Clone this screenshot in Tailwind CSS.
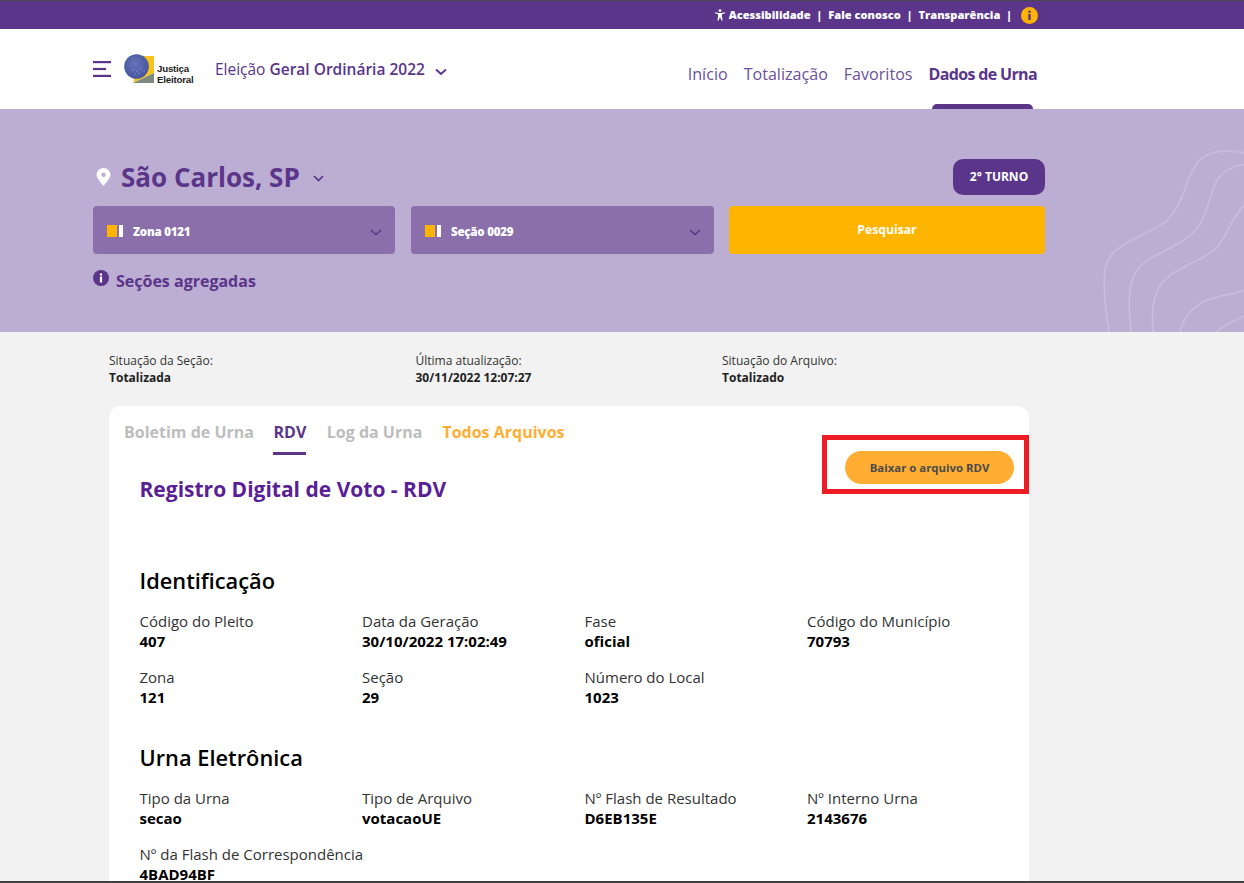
<!DOCTYPE html>
<html lang="pt-BR"><head><meta charset="utf-8"><title>Dados de Urna</title>
<script src="https://cdn.jsdelivr.net/npm/@tailwindcss/browser@4"></script></head>
<body class="m-0">
<div class="relative h-[883px] w-[1244px] overflow-hidden bg-[#f2f2f2] font-['Open_Sans','Noto_Sans',sans-serif] text-black">
  <div class="flex h-[29px] items-center justify-end border-t border-[#4a4a4a] bg-[#5a358a] pr-[206px] text-[11.100px] font-extrabold text-white">
    <svg class="mr-[3px] h-3 w-3" viewBox="0 0 12 12" fill="#fff"><circle cx="6" cy="1.600" r="1.400"/><path d="M1 3.200l3.500.8h3l3.500-.8.300.9L8 5.200v2.300l.5 4H7.400L6 8l-1.400 3.500H3.500l.5-4V5.200L.7 4.100z"/></svg>
    <span>Acessibilidade</span><span class="mx-[6px]">|</span><span>Fale conosco</span><span class="mx-[6px]">|</span><span>Transparência</span><span class="mx-[6px]">|</span>
    <svg class="ml-[3px] h-[17px] w-[17px]" viewBox="0 0 17 17"><circle cx="8.500" cy="8.500" r="8.500" fill="#ffb400"/><rect x="7.300" y="7" width="2.400" height="6" fill="#5a358a"/><circle cx="8.500" cy="4.800" r="1.300" fill="#5a358a"/></svg>
  </div>
  <header class="relative flex h-[80px] bg-white pl-[93px] pr-[207px]">
    <div class="flex items-center self-start pt-[24px]">
      <svg class="h-[16px] w-[19px]" viewBox="0 0 19 16" fill="#5a358a"><rect y="0" width="18" height="2.200"/><rect y="6.900" width="13" height="2.200"/><rect y="13.800" width="18" height="2.200"/></svg>
      <svg class="ml-[12px] h-[32px] w-[32px]" viewBox="0 0 32 32">
        <path d="M18 3h12v17L9 30z" fill="#f6c31c"/><path d="M9 30l21-10v10z" fill="#7c8a80"/>
        <defs><radialGradient id="g" cx=".45" cy=".4" r=".7"><stop offset="0" stop-color="#6674b8"/><stop offset="1" stop-color="#414e9a"/></radialGradient></defs>
        <circle cx="12.500" cy="13.500" r="12.300" fill="url(#g)"/>
        <g fill="#aab3dd"><circle cx="9" cy="17" r=".6"/><circle cx="13" cy="18" r=".6"/><circle cx="17" cy="16" r=".6"/><circle cx="15" cy="20" r=".6"/><circle cx="20" cy="18" r=".6"/><circle cx="11" cy="21" r=".5"/></g></svg>
      <div class="ml-[1px] mt-[9px] font-['Liberation_Sans',sans-serif] text-[9.700px] font-bold leading-[11px] tracking-[-0.2px] text-[#222]"><div>Justiça</div><div>Eleitoral</div></div>
      <div class="ml-[21.500px] mt-[2px] flex items-center text-[15.500px] text-[#5a358a]"><span>Eleição&nbsp;</span><b class="font-semibold">Geral Ordinária 2022</b>
        <svg class="ml-[10px] mt-[3px] h-[8px] w-[12px]" viewBox="0 0 12 8" fill="none" stroke="#5a358a" stroke-width="2"><path d="M1 1.500l5 4.500 5-4.500"/></svg></div>
    </div>
    <nav class="ml-auto flex gap-[16px] pt-[34px] text-[16.100px] leading-[22px] text-[#6d4f9c]">
      <span>Início</span><span>Totalização</span><span>Favoritos</span><span class="text-[16px] font-bold tracking-[-0.65px] text-[#5a358a]">Dados de Urna</span>
    </nav>
    <div class="absolute bottom-0 left-[932px] h-[5px] w-[101px] rounded-t-[5px] bg-[#5a358a]"></div>
  </header>
  <section class="relative h-[223px] overflow-hidden bg-[#bcadd2] pl-[93px] pr-[199px] pt-[50px]">
    <svg class="absolute left-[1100px] top-[40px] h-[183px] w-[144px]" viewBox="0 0 144 183" fill="none" stroke="#c7bbdb" stroke-width="2">
      <path d="M9 183C6 165 3 140 5 122 8 95 40 90 62 75 85 60 85 25 100 11 112 0 130 1 144 4"/>
      <path d="M31 183C29 165 28 150 31 135 38 105 70 105 92 85 110 68 108 40 122 25 128 20 136 16 144 16"/>
      <path d="M53 183C52 170 52 155 56 145 66 118 95 118 115 100 128 88 130 70 144 56"/>
      <path d="M80 183C84 168 90 160 105 152 118 146 134 146 144 141"/>
      <path d="M116 183C124 176 134 172 144 167"/>
    </svg>
    <div class="relative flex h-[36px] items-center justify-between">
      <div class="flex items-center">
        <svg class="ml-[3px] h-[18px] w-[15px]" viewBox="0 0 15 18"><path fill-rule="evenodd" fill="#fff" d="M7.500 18C3 12.500.5 9.500.5 6.800a7 6.800 0 0 1 14 0C14.500 9.500 12 12.500 7.500 18zM7.500 4.500a2.200 2.200 0 1 0 0 4.400 2.200 2.200 0 0 0 0-4.400z"/></svg>
        <h1 class="ml-[10px] text-[26px] font-bold leading-[36px] text-[#5a358a]">São Carlos, SP</h1>
        <svg class="ml-[13px] mt-[3px] h-[7px] w-[11px]" viewBox="0 0 11 7" fill="none" stroke="#5a358a" stroke-width="1.700"><path d="M1 1l4.500 4.500L10 1"/></svg>
      </div>
      <button class="flex h-[36px] w-[92px] items-center justify-center rounded-[10px] bg-[#5a358a] text-[12px] font-bold text-white">2° TURNO</button>
    </div>
    <div class="relative mt-[11px] flex gap-[16px]">
      <div class="flex h-[48px] w-[302px] items-center rounded-[4px] bg-[#8a6fab] pl-[14px] pr-[13px] text-[11.500px] font-extrabold text-white">
        <i class="mt-[2px] h-[12px] w-[10px] bg-[#ffb400]"></i><i class="ml-[2px] mt-[2px] h-[12px] w-[4px] bg-white"></i><span class="ml-[10px] pt-[3px] tracking-[-0.2px]">Zona 0121</span>
        <svg class="ml-auto mt-[4px] h-[7px] w-[12px]" viewBox="0 0 12 7" fill="none" stroke="#5a358a" stroke-width="1.500"><path d="M1 1l5 4.500L11 1"/></svg>
      </div>
      <div class="flex h-[48px] w-[303px] items-center rounded-[4px] bg-[#8a6fab] pl-[14px] pr-[13px] text-[11.500px] font-extrabold text-white">
        <i class="mt-[2px] h-[12px] w-[10px] bg-[#ffb400]"></i><i class="ml-[2px] mt-[2px] h-[12px] w-[4px] bg-white"></i><span class="ml-[10px] pt-[3px] tracking-[-0.2px]">Seção 0029</span>
        <svg class="ml-auto mt-[4px] h-[7px] w-[12px]" viewBox="0 0 12 7" fill="none" stroke="#5a358a" stroke-width="1.500"><path d="M1 1l5 4.500L11 1"/></svg>
      </div>
      <button class="-ml-[1px] h-[48px] w-[316px] rounded-[4px] bg-[#ffb400] text-[12.200px] font-bold text-white">Pesquisar</button>
    </div>
    <div class="relative mt-[15px] flex items-start text-[#5a358a]">
      <svg class="mt-[1px] h-[16px] w-[16px]" viewBox="0 0 16 16"><circle cx="8" cy="8" r="8" fill="#5a358a"/><rect x="6.900" y="6.500" width="2.200" height="6" fill="#fff"/><circle cx="8" cy="4.400" r="1.200" fill="#fff"/></svg>
      <span class="ml-[7px] text-[16px] font-bold leading-[24px]">Seções agregadas</span>
    </div>
  </section>
  <div class="ml-[109px] grid w-[920px] grid-cols-[306.500px_306.500px_1fr] pt-[20px] text-[12px] leading-[17px] text-[#333]">
    <div>Situação da Seção:<br><b class="text-[#222]">Totalizada</b></div>
    <div>Última atualização:<br><b class="text-[#222]">30/11/2022 12:07:27</b></div>
    <div>Situação do Arquivo:<br><b class="text-[#222]">Totalizado</b></div>
  </div>
  <main class="relative ml-[109px] mt-[20px] h-[500px] w-[920px] rounded-t-[12px] bg-white">
    <div class="flex pl-[15px] pt-[14px] text-[16px] font-bold leading-[24px] text-[#bdbdbd]">
      <span>Boletim de Urna</span>
      <span class="ml-[19.500px] h-[35px] border-b-[3px] border-[#5a358a] text-[#5a358a]">RDV</span>
      <span class="ml-[20.500px]">Log da Urna</span>
      <span class="ml-[20px] text-[#ffae33]">Todos Arquivos</span>
    </div>
    <div class="absolute left-[713px] top-[29px] flex h-[59px] w-[207px] border-[5px] border-[#ee1c25]">
      <button class="ml-[18px] mt-[11px] h-[33px] w-[169px] rounded-full bg-[#ffae33] pt-[1px] text-[11.400px] font-bold text-[#4a4a4a]">Baixar o arquivo RDV</button>
    </div>
    <div class="pl-[30.500px]">
      <h2 class="mt-[19px] text-[21px] font-bold leading-[30px] text-[#5a1f96]">Registro Digital de Voto - RDV</h2>
      <h3 class="mt-[62px] text-[21.800px] font-semibold leading-[30px]">Identificação</h3>
      <div class="mt-[15px] grid grid-cols-[222.500px_222.500px_222.500px_1fr] gap-y-[16px] text-[15px] leading-[20px] text-[#333]">
        <div>Código do Pleito<br><b class="text-black">407</b></div>
        <div>Data da Geração<br><b class="text-black">30/10/2022 17:02:49</b></div>
        <div>Fase<br><b class="text-black">oficial</b></div>
        <div>Código do Município<br><b class="text-black">70793</b></div>
        <div>Zona<br><b class="text-black">121</b></div>
        <div>Seção<br><b class="text-black">29</b></div>
        <div>Número do Local<br><b class="text-black">1023</b></div>
      </div>
      <h3 class="mt-[36px] text-[21.800px] font-semibold leading-[30px]">Urna Eletrônica</h3>
      <div class="mt-[15px] grid grid-cols-[222.500px_222.500px_222.500px_1fr] gap-y-[16px] text-[15px] leading-[20px] text-[#333]">
        <div>Tipo da Urna<br><b class="text-black">secao</b></div>
        <div>Tipo de Arquivo<br><b class="text-black">votacaoUE</b></div>
        <div>Nº Flash de Resultado<br><b class="text-black">D6EB135E</b></div>
        <div>Nº Interno Urna<br><b class="text-black">2143676</b></div>
        <div class="col-span-2">Nº da Flash de Correspondência<br><b class="text-black">4BAD94BF</b></div>
      </div>
    </div>
  </main>
  <div class="absolute bottom-0 left-0 h-[2px] w-full bg-[#3f3f3f]"></div>
</div>
</body></html>
